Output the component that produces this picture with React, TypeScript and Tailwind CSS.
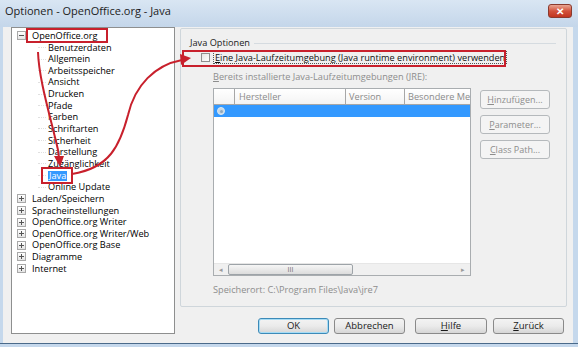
import React from "react";

const font = { fontFamily: '"Open Sans", "Noto Sans", sans-serif' };

const children = [
  "Benutzerdaten",
  "Allgemein",
  "Arbeitsspeicher",
  "Ansicht",
  "Drucken",
  "Pfade",
  "Farben",
  "Schriftarten",
  "Sicherheit",
  "Darstellung",
  "Zugänglichkeit",
  "Java",
  "Online Update",
];

const others = [
  "Laden/Speichern",
  "Spracheinstellungen",
  "OpenOffice.org Writer",
  "OpenOffice.org Writer/Web",
  "OpenOffice.org Base",
  "Diagramme",
  "Internet",
];

function Expander({ open }: { open: boolean }) {
  return (
    <span className="relative w-[9px] h-[9px] border border-[#a8a8a8] bg-gradient-to-b from-white to-[#e4e4e4] mr-[6px] shrink-0">
      <span className="absolute left-[1px] top-[3px] w-[5px] h-[1px] bg-[#555]" />
      {!open && <span className="absolute left-[3px] top-[1px] w-[1px] h-[5px] bg-[#555]" />}
    </span>
  );
}

function Btn({ label, u, def, cls }: { label: string; u?: number; def?: boolean; cls?: string }) {
  const text =
    u === undefined ? (
      label
    ) : (
      <>
        {label.slice(0, u)}
        <span className="underline">{label[u]}</span>
        {label.slice(u + 1)}
      </>
    );
  return (
    <div
      className={`w-[71px] h-[16px] rounded-[3px] border flex items-center justify-center text-[9.5px] text-[#1a1a1a] bg-gradient-to-b from-[#f3f3f3] via-[#ebebeb] to-[#d6d6d6] ${
        def ? "border-[#3c8ab8] shadow-[inset_0_0_0_1px_#a6dcf5]" : "border-[#8a8a8a]"
      } ${cls ?? ""}`}
    >
      {text}
    </div>
  );
}

function SideBtn({ label }: { label: React.ReactNode }) {
  return (
    <div className="w-[70px] h-[19px] rounded-[3px] border border-[#b5b9bc] bg-[#f4f4f4] flex items-center justify-center text-[9px] text-[#8d8d8d] whitespace-nowrap">
      {label}
    </div>
  );
}

export default function App() {
  return (
    <div
      className="relative w-[578px] h-[347px] overflow-hidden bg-[#c5d8ec]"
      style={font}
    >
      {/* title bar */}
      <div className="h-[27px] bg-gradient-to-b from-[#d9e6f3] to-[#c4d6ea] flex items-start pl-[5px] pt-[4px] relative">
        <span className="text-[11px] text-[#1c1c1c] leading-[14px]">Optionen - OpenOffice.org - Java</span>
        <div className="absolute right-[6px] top-[4px] w-[24px] h-[14px] rounded-[3px] border border-[#8a3a2e] bg-gradient-to-b from-[#e8a593] via-[#d2523c] to-[#c2351f] flex items-center justify-center">
          <span className="text-white text-[10px] font-bold leading-none">✕</span>
        </div>
      </div>

      {/* body */}
      <div className="absolute left-[3px] right-[5px] top-[27px] bottom-[4px] bg-[#f0f0f0] flex pl-[8px]">
        {/* tree */}
        <div className="w-[164px] h-[307px] border border-[#8e8f8f] bg-white pt-[2px] text-[9.2px] text-black whitespace-nowrap">
          <div className="flex items-center h-[11.65px] pl-[5px]">
            <Expander open />
            <span>OpenOffice.org</span>
          </div>
          {children.map((c) => (
            <div key={c} className="flex items-center h-[11.65px] pl-[26px]">
              <span className="w-[8px] border-t border-dotted border-[#e0e0e0] mr-[2px]" />
              <span
                className={
                  c === "Java" ? "bg-[#3399ff] text-white px-[1px] leading-[10px]" : ""
                }
              >
                {c}
              </span>
            </div>
          ))}
          {others.map((c) => (
            <div key={c} className="flex items-center h-[11.65px] pl-[5px]">
              <Expander open={false} />
              <span>{c}</span>
            </div>
          ))}
        </div>

        {/* right side */}
        <div className="ml-[5px] w-[387px] flex flex-col">
          <div className="mt-[1px] h-[279px] border border-[#cfd6db] rounded-[2px] relative px-[9px] pt-[8px] text-[9.2px]">
            <div className="flex items-center text-[#1a1a1a] h-[12px]">
              <span>Java Optionen</span>
              <span className="flex-1 ml-[4px] mr-[1px] border-t border-[#d5dbe0]" />
            </div>
            <div className="flex items-center mt-[2px] ml-[11px] h-[12px] whitespace-nowrap">
              <span className="w-[9px] h-[9px] border border-[#8f8f8f] bg-gradient-to-br from-[#e5e5e5] to-white mr-[3px]" />
              <span className="text-[#111] border border-dotted border-[#555] px-[1px] leading-[11px]">
                <span className="underline">E</span>ine Java-Laufzeitumgebung (Java runtime environment) verwenden
              </span>
            </div>
            <div className="mt-[8px] ml-[23px] text-[#8d8d8d] h-[12px] leading-[12px]">
              <span className="underline">B</span>ereits installierte Java-Laufzeitumgebungen (JRE):
            </div>
            <div className="flex mt-[5px] ml-[23px]">
              {/* table */}
              <div className="w-[258px] h-[188px] border border-[#a9adb0] bg-white flex flex-col">
                <div className="flex h-[16px] border-b border-[#a7a7a7] text-[#8a8a8a] bg-gradient-to-b from-white to-[#f4f4f4] whitespace-nowrap">
                  <div className="w-[21px] border-r border-[#a7a7a7]" />
                  <div className="w-[111px] border-r border-[#a7a7a7] pl-[4px] leading-[15px]">Hersteller</div>
                  <div className="w-[59px] border-r border-[#a7a7a7] pl-[3px] leading-[15px]">Version</div>
                  <div className="flex-1 pl-[3px] leading-[15px] overflow-hidden">Besondere Merkmale</div>
                </div>
                <div className="h-[12px] bg-[#3399ff] flex items-center pl-[3px]">
                  <span className="w-[8px] h-[8px] rounded-full border border-[#d8e8f5] bg-[#c9d7e2] flex items-center justify-center">
                    <span className="w-[3px] h-[3px] rounded-full bg-[#8fa8bc]" />
                  </span>
                </div>
                <div className="flex-1" />
                {/* scrollbar */}
                <div className="h-[12px] bg-[#f0f0f0] flex items-center border-t border-[#e6e6e6]">
                  <span className="w-[14px] text-center text-[7px] text-[#9a9a9a] leading-none">◂</span>
                  <div className="w-[125px] h-[11px] rounded-[2px] border border-[#9da3a8] bg-gradient-to-b from-[#f6f6f6] to-[#dcdcdc] flex items-center justify-center text-[7px] text-[#6d6d6d] leading-none">
                    III
                  </div>
                  <div className="flex-1" />
                  <span className="w-[14px] text-center text-[7px] text-[#9a9a9a] leading-none">▸</span>
                </div>
              </div>
              {/* side buttons */}
              <div className="ml-[9px] mt-[2px] flex flex-col gap-[6px]">
                <SideBtn label={<><span className="underline">H</span>inzufügen...</>} />
                <SideBtn label={<><span className="underline">P</span>arameter...</>} />
                <SideBtn label={<><span className="underline">C</span>lass Path...</>} />
              </div>
            </div>
            <div className="mt-[8px] ml-[23px] text-[#8d8d8d] leading-[12px]">
              Speicherort: C:\Program Files\Java\jre7
            </div>
          </div>
          <div className="flex mt-[11px] pl-[78px]">
            <Btn label="OK" def />
            <Btn label="Abbrechen" cls="ml-[5px] w-[69px]" />
            <Btn label="Hilfe" u={0} cls="ml-[10px] w-[72px]" />
            <Btn label="Zurück" u={0} cls="ml-[6px]" />
          </div>
        </div>
      </div>
      <div className="absolute left-0 right-0 bottom-[3px] h-[1px] bg-[#4a6a8a]" />

      {/* annotation overlay */}
      <svg className="absolute inset-0 pointer-events-none" width="578" height="347">
        <rect x="27" y="29" width="80" height="13" fill="none" stroke="#c8202c" strokeWidth="2" />
        <rect x="42" y="168" width="30" height="15" fill="none" stroke="#c8202c" strokeWidth="2" />
        <rect x="183" y="51" width="322" height="15" fill="none" stroke="#c8202c" strokeWidth="2" />
        <path d="M38 52 C 39 80, 50 115, 58 150 L 59 158" fill="none" stroke="#c8202c" strokeWidth="2" />
        <polygon points="54,156 64,156 60,167" fill="#c8202c" />
        <path d="M72 174 C 110 168, 120 145, 128 115 C 135 85, 155 65, 182 60" fill="none" stroke="#c8202c" strokeWidth="2" />
        <polygon points="180,54 191,58 181,65" fill="#c8202c" />
      </svg>
    </div>
  );
}
